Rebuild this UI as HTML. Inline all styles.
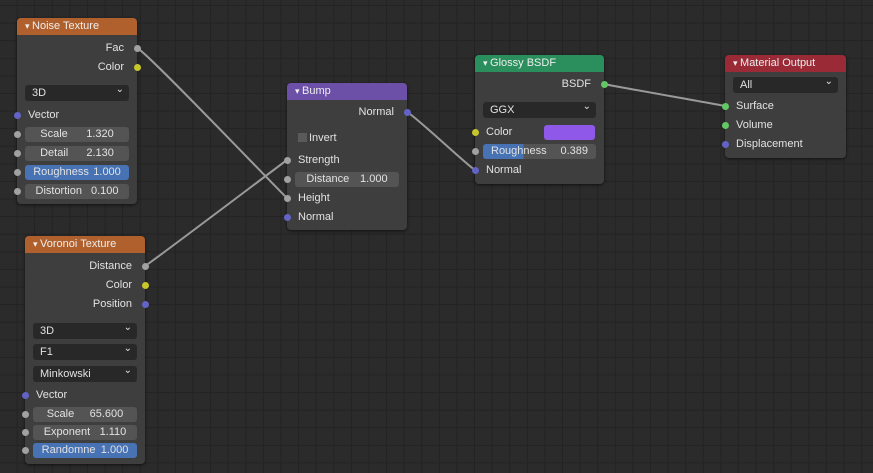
<!DOCTYPE html>
<html><head><meta charset="utf-8"><style>
*{box-sizing:border-box;margin:0;padding:0}
body{width:873px;height:473px;overflow:hidden;position:relative;font-family:"Liberation Sans","DejaVu Sans",sans-serif;font-size:11px;color:#e2e2e2;
background-color:#2b2b2b;
background-image:linear-gradient(#232323 1px,transparent 1px),linear-gradient(90deg,#232323 1px,transparent 1px);
background-size:17.6px 17.6px;background-position:-1px 5px}
.n{position:absolute;background:#3e3e3e;border-radius:4px;box-shadow:0 1px 3px rgba(0,0,0,.6)}
.h{height:17px;border-radius:4px 4px 0 0;padding-left:8px;line-height:17px;color:#eee}
.h:before{content:"▾ ";font-size:9px}
.r{position:absolute;left:0;right:0;height:16px;line-height:16px}
.o{text-align:right;padding-right:13px}
.i{padding-left:11px}
.s{position:absolute;width:7px;height:7px;border-radius:50%;top:4.5px}
.sl{left:-3.5px}.sr{right:-3.5px}
.g{background:#a1a1a1}.y{background:#c7c729}.b{background:#6363c7}.gr{background:#63c763}
.f{position:absolute;left:8px;right:8px;height:15px;top:0.5px;background:#545454;border-radius:3px;display:flex;justify-content:space-around;padding:0 6px;line-height:15px}
.f.bl{background:#4772b3}
.d{position:absolute;left:8px;right:8px;height:16px;background:#282828;border-radius:3px;padding-left:7px;line-height:16px}
.d:after{content:"⌄";position:absolute;right:5px;top:-3px;font-size:10px}
svg{position:absolute;left:0;top:0}
</style></head><body>
<svg width="873" height="473"><g stroke="#9a9a9a" stroke-width="2" fill="none">
<path d="M137 48 C145 50 280 192 287 198"/>
<path d="M145 266 C152 262 280 165 287 160"/>
<path d="M407 112 C414 115 468 166 475 170"/>
<path d="M604 84 C612 86 716 104 725 106"/>
</g></svg>

<div class="n" style="left:17px;top:18px;width:120px;height:186px">
<div class="h" style="background:#b0602c">Noise Texture</div>
<div class="r o" style="top:22px">Fac<span class="s sr g"></span></div>
<div class="r o" style="top:41px">Color<span class="s sr y"></span></div>
<div class="d" style="top:67px">3D</div>
<div class="r i" style="top:89px">Vector<span class="s sl b"></span></div>
<div class="r" style="top:108px"><span class="s sl g"></span><div class="f"><span>Scale</span><span>1.320</span></div></div>
<div class="r" style="top:127px"><span class="s sl g"></span><div class="f"><span>Detail</span><span>2.130</span></div></div>
<div class="r" style="top:146px"><span class="s sl g"></span><div class="f bl"><span>Roughness</span><span>1.000</span></div></div>
<div class="r" style="top:165px"><span class="s sl g"></span><div class="f"><span>Distortion</span><span>0.100</span></div></div>
</div>

<div class="n" style="left:25px;top:236px;width:120px;height:228px">
<div class="h" style="background:#b0602c">Voronoi Texture</div>
<div class="r o" style="top:22px">Distance<span class="s sr g"></span></div>
<div class="r o" style="top:41px">Color<span class="s sr y"></span></div>
<div class="r o" style="top:60px">Position<span class="s sr b"></span></div>
<div class="d" style="top:87px">3D</div>
<div class="d" style="top:108px">F1</div>
<div class="d" style="top:130px">Minkowski</div>
<div class="r i" style="top:151px">Vector<span class="s sl b"></span></div>
<div class="r" style="top:170px"><span class="s sl g"></span><div class="f"><span>Scale</span><span>65.600</span></div></div>
<div class="r" style="top:188px"><span class="s sl g"></span><div class="f"><span>Exponent</span><span>1.110</span></div></div>
<div class="r" style="top:206px"><span class="s sl g"></span><div class="f bl"><span>Randomne</span><span>1.000</span></div></div>
</div>

<div class="n" style="left:287px;top:83px;width:120px;height:147px">
<div class="h" style="background:#6c50a8">Bump</div>
<div class="r o" style="top:21px">Normal<span class="s sr b"></span></div>
<div class="r i" style="top:47px"><span style="display:inline-block;width:9px;height:9px;background:#5a5a5a;vertical-align:-1px;margin-right:2px"></span>Invert</div>
<div class="r i" style="top:69px">Strength<span class="s sl g"></span></div>
<div class="r" style="top:88px"><span class="s sl g"></span><div class="f"><span>Distance</span><span>1.000</span></div></div>
<div class="r i" style="top:107px">Height<span class="s sl g"></span></div>
<div class="r i" style="top:126px">Normal<span class="s sl b"></span></div>
</div>

<div class="n" style="left:475px;top:55px;width:129px;height:129px">
<div class="h" style="background:#2a8f5c">Glossy BSDF</div>
<div class="r o" style="top:21px">BSDF<span class="s sr gr"></span></div>
<div class="d" style="top:47px">GGX</div>
<div class="r i" style="top:69px">Color<span class="s sl y"></span><span style="position:absolute;left:69px;right:9px;top:1px;height:15px;background:#9058e8;border-radius:3px"></span></div>
<div class="r" style="top:88px"><span class="s sl g"></span><div class="f" style="justify-content:space-between;padding:0 8px;background:linear-gradient(90deg,#4772b3 0 36%,#545454 36%)"><span>Roughness</span><span>0.389</span></div></div>
<div class="r i" style="top:107px">Normal<span class="s sl b"></span></div>
</div>

<div class="n" style="left:725px;top:55px;width:121px;height:103px">
<div class="h" style="background:#9a2a36">Material Output</div>
<div class="d" style="top:22px">All</div>
<div class="r i" style="top:43px">Surface<span class="s sl gr"></span></div>
<div class="r i" style="top:62px">Volume<span class="s sl gr"></span></div>
<div class="r i" style="top:81px">Displacement<span class="s sl b"></span></div>
</div>
</body></html>
